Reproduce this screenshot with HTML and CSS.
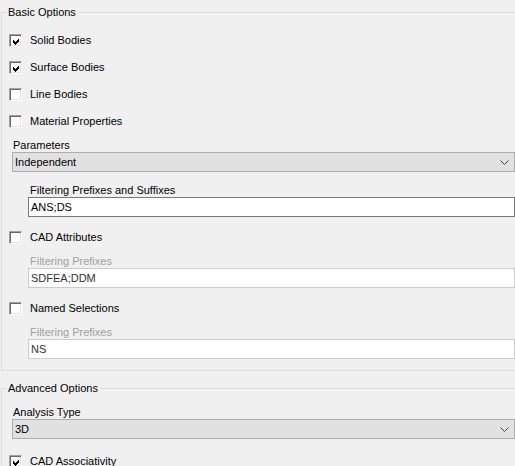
FILE: index.html
```html
<!DOCTYPE html>
<html lang="en">
<head>
    <meta charset="UTF-8">
    <title>Import Options</title>
    <link rel="stylesheet" href="styles.css">
</head>
<body>
    <fieldset class="group basic">
        <legend>Basic Options</legend>

        <div class="check-row first">
            <span class="check"><svg viewBox="0 0 9 9"><path d="M1 3 L3 5 L7 1 L7 4 L3 8 L1 6 Z"/></svg></span>
            <span>Solid Bodies</span>
        </div>
        <div class="check-row">
            <span class="check"><svg viewBox="0 0 9 9"><path d="M1 3 L3 5 L7 1 L7 4 L3 8 L1 6 Z"/></svg></span>
            <span>Surface Bodies</span>
        </div>
        <div class="check-row">
            <span class="check"></span>
            <span>Line Bodies</span>
        </div>
        <div class="check-row">
            <span class="check"></span>
            <span>Material Properties</span>
        </div>

        <div class="field">
            <div class="label">Parameters</div>
            <div class="combo">
                <span>Independent</span>
                <svg class="arrow" viewBox="0 0 9 5"><path d="M0.5 0.5 L4.5 4.5 L8.5 0.5"/></svg>
            </div>
        </div>

        <div class="field sub">
            <div class="label">Filtering Prefixes and Suffixes</div>
            <div class="textbox">ANS;DS</div>
        </div>

        <div class="check-row">
            <span class="check"></span>
            <span>CAD Attributes</span>
        </div>
        <div class="field sub after-check">
            <div class="label disabled">Filtering Prefixes</div>
            <div class="textbox off">SDFEA;DDM</div>
        </div>

        <div class="check-row">
            <span class="check"></span>
            <span>Named Selections</span>
        </div>
        <div class="field sub after-check">
            <div class="label disabled">Filtering Prefixes</div>
            <div class="textbox off">NS</div>
        </div>
    </fieldset>

    <fieldset class="group advanced">
        <legend>Advanced Options</legend>

        <div class="field">
            <div class="label">Analysis Type</div>
            <div class="combo">
                <span>3D</span>
                <svg class="arrow" viewBox="0 0 9 5"><path d="M0.5 0.5 L4.5 4.5 L8.5 0.5"/></svg>
            </div>
        </div>

        <div class="check-row assoc">
            <span class="check"><svg viewBox="0 0 9 9"><path d="M1 3 L3 5 L7 1 L7 4 L3 8 L1 6 Z"/></svg></span>
            <span>CAD Associativity</span>
        </div>
    </fieldset>
</body>
</html>
```

FILE: styles.css
```css
body {
    margin: 0;
    padding-top: 6px;
    background-color: #f0f0f0;
    font-family: "Liberation Sans", Arial, sans-serif;
    font-size: 11px;
    color: #000;
    overflow: hidden;
}
.group {
    margin: 0 0 0 1px;
    padding: 0 0 11px 0;
    border: 1px solid #dcdcdc;
    border-right: none;
    min-width: 0;
}
.group legend {
    margin-left: 4px;
    padding: 0 2px;
    line-height: 13px;
}
.advanced {
    margin-top: 11px;
    padding-bottom: 4px;
}
.check-row {
    display: flex;
    align-items: center;
    gap: 8px;
    height: 13px;
    margin: 14px 0 0 7px;
    line-height: 13px;
}
.check-row.first {
    margin-top: 15px;
}
.check-row.assoc {
    margin-top: 16px;
}
.check {
    box-sizing: border-box;
    width: 13px;
    height: 13px;
    border: 1px solid;
    border-color: #a0a0a0 #ffffff #ffffff #a0a0a0;
    box-shadow: inset 1px 1px 0 #696969, inset -1px -1px 0 #e3e3e3;
    background-color: #fff;
    display: flex;
    align-items: center;
    justify-content: center;
}
.check svg {
    width: 9px;
    height: 9px;
    margin: 1px 0 0 1px;
    fill: #000;
    shape-rendering: crispEdges;
}
.field {
    margin: 11px 0 0 10px;
    width: 503px;
}
.field.sub {
    margin: 12px 0 0 26px;
    width: 487px;
}
.field.sub.after-check {
    margin-top: 11px;
}
.label {
    line-height: 13px;
    padding-left: 1px;
}
.field.sub .label {
    padding-left: 2px;
}
.label.disabled {
    color: #a0a0a0;
}
.combo {
    box-sizing: border-box;
    height: 20px;
    display: flex;
    align-items: center;
    justify-content: space-between;
    padding: 0 5px 0 2px;
    background-color: #e1e1e1;
    border: 1px solid #adadad;
}
.arrow {
    width: 9px;
    height: 5px;
    fill: none;
    stroke: #444;
    stroke-width: 1;
}
.textbox {
    box-sizing: border-box;
    height: 20px;
    line-height: 18px;
    padding-left: 2px;
    background-color: #fff;
    border: 1px solid #7a7a7a;
}
.textbox.off {
    border-color: #cccccc;
    color: #333;
}
```
